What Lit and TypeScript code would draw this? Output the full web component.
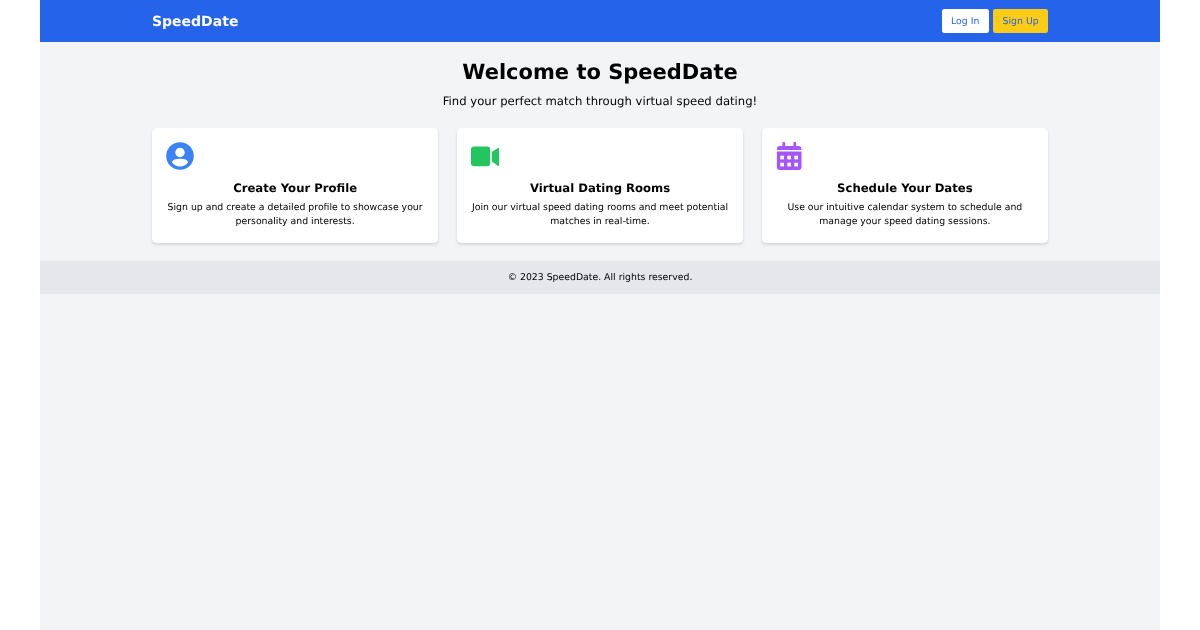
import { LitElement, html, css, svg } from 'lit';
import { customElement } from 'lit/decorators.js';

const cards = [
  {
    icon: html`<svg class="icon" viewBox="0 0 28 28">
      <circle cx="14" cy="14" r="13.8" fill="#3b82f6"></circle>
      <circle cx="14" cy="10.5" r="4.7" fill="#fff"></circle>
      <path d="M6 20.6 C6 17.6 10 16.8 14 16.8 C18 16.8 22 17.6 22 20.6 C20 23.4 17 24.6 14 24.6 C11 24.6 8 23.4 6 20.6 Z" fill="#fff"></path>
    </svg>`,
    title: 'Create Your Profile',
    text: 'Sign up and create a detailed profile to showcase your personality and interests.',
  },
  {
    icon: html`<svg class="icon" viewBox="0 0 28 28">
      <rect x="0" y="4.6" width="19.2" height="19.6" rx="3" fill="#22c55e"></rect>
      <path d="M21 9.8 L27 5.9 a.6 .6 0 0 1 1 .5 V23.4 a.6 .6 0 0 1 -1 .5 L21 19.6 Z" fill="#22c55e"></path>
    </svg>`,
    title: 'Virtual Dating Rooms',
    text: 'Join our virtual speed dating rooms and meet potential matches in real-time.',
  },
  {
    icon: html`<svg class="icon" viewBox="0 0 28 28">
      <rect x="6.4" y="0" width="2.8" height="6" rx="1" fill="#a855f7"></rect>
      <rect x="17.4" y="0" width="2.8" height="6" rx="1" fill="#a855f7"></rect>
      <path d="M.9 7 a3 3 0 0 1 3 -3 H22.5 a3 3 0 0 1 3 3 V8 H.9 Z" fill="#a855f7"></path>
      <path d="M.9 9.4 H25.5 V25.6 a2.4 2.4 0 0 1 -2.4 2.4 H3.3 a2.4 2.4 0 0 1 -2.4 -2.4 Z" fill="#a855f7"></path>
      ${[4.3, 11.3, 18.3].flatMap((x) =>
        [13.7, 20.7].map((y) => svg`<rect x=${x} y=${y} width="3.7" height="3.7" fill="#fff"></rect>`)
      )}
    </svg>`,
    title: 'Schedule Your Dates',
    text: 'Use our intuitive calendar system to schedule and manage your speed dating sessions.',
  },
];

@customElement('app-root')
export class AppRoot extends LitElement {
  static styles = css`
    :host {
      display: block;
      min-height: 630px;
      background: #fff;
      font-family: 'DejaVu Sans', sans-serif;
      font-size: 9.333px;
      line-height: 14px;
      color: #000;
      text-rendering: geometricPrecision;
    }

    .page {
      width: 1120px;
      min-height: 630px;
      margin: 0 auto;
      background: #f3f4f6;
      will-change: transform;
    }

    .container {
      width: 896px;
      margin: 0 auto;
    }

    header {
      background: #2563eb;
      padding: 9.333px 0;
    }

    header .container {
      display: flex;
      justify-content: space-between;
      align-items: center;
    }

    .logo {
      color: #fff;
      font-size: 14px;
      line-height: 18.667px;
      font-weight: 700;
      padding-top: 2px;
    }

    .actions {
      display: flex;
      gap: 4.667px;
    }

    .btn {
      padding: 5.333px 9.333px 4px;
      border-radius: 2.333px;
      color: #2563eb;
    }

    .login {
      background: #fff;
    }

    .signup {
      background: #facc15;
    }

    main {
      padding: 18.667px 0;
      text-align: center;
    }

    h1 {
      margin: 0 0 9.333px;
      font-size: 21px;
      line-height: 23.333px;
      font-weight: 700;
    }

    .lead {
      margin: 0 0 18.667px;
      font-size: 11.667px;
      line-height: 16.333px;
    }

    .cards {
      display: grid;
      grid-template-columns: repeat(3, 1fr);
      gap: 18.667px;
    }

    .card {
      background: #fff;
      border-radius: 4.667px;
      box-shadow: 0 2.33px 3.5px -0.58px rgba(0, 0, 0, 0.1), 0 1.17px 2.33px -1.17px rgba(0, 0, 0, 0.1);
      padding: 14px;
    }

    .icon {
      display: block;
      width: 28px;
      height: 28px;
      margin-bottom: 9.333px;
    }

    h2 {
      margin: 0 0 4.667px;
      font-size: 11.667px;
      line-height: 16.333px;
      font-weight: 700;
    }

    .card p {
      margin: 0;
      padding-top: 0.5px;
      margin-bottom: -0.5px;
    }

    footer {
      padding: 9.833px 0 8.833px;
      background: #e5e7eb;
      text-align: center;
    }
  `;

  render() {
    return html`
      <div class="page">
        <header>
          <div class="container">
            <div class="logo">SpeedDate</div>
            <div class="actions">
              <div class="btn login">Log In</div>
              <div class="btn signup">Sign Up</div>
            </div>
          </div>
        </header>
        <main>
          <div class="container">
            <h1>Welcome to SpeedDate</h1>
            <p class="lead">Find your perfect match through virtual speed dating!</p>
            <div class="cards">
              ${cards.map(
                (c) => html`
                  <div class="card">
                    ${c.icon}
                    <h2>${c.title}</h2>
                    <p>${c.text}</p>
                  </div>
                `
              )}
            </div>
          </div>
        </main>
        <footer>© 2023 SpeedDate. All rights reserved.</footer>
      </div>
    `;
  }
}
